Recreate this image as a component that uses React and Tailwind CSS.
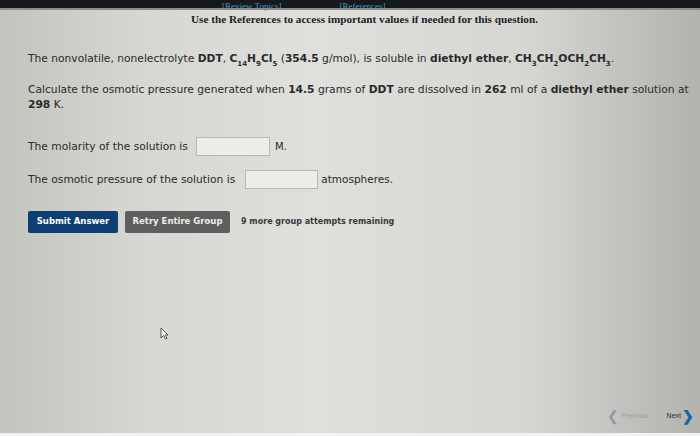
import React from "react";

const Sub = ({ children }) => <sub className="text-[7px] align-[-2px] leading-none">{children}</sub>;

export default function App() {
  return (
    <div className="w-[700px] h-[436px] overflow-hidden flex flex-col bg-[linear-gradient(90deg,#c4c4bf_0%,#d6d6d2_20%,#dfdfdc_45%,#d6d6d2_75%,#b2b2ae_100%)] font-['DejaVu_Sans',sans-serif] text-[#2a2a2a]">
      {/* top bar, cut off */}
      <div className="h-[8px] bg-[#15191d] flex items-end text-[9px] leading-none text-[#3e9fc0] font-['Liberation_Serif',serif]">
        <span className="ml-[222px] -mb-[3px]">[Review Topics]</span>
        <span className="ml-[58px] -mb-[3px]">[References]</span>
      </div>
      <div className="h-[2px] bg-[#8c8c88]" />

      <p className="mt-[1px] ml-[191px] text-[11.2px] font-bold font-['Liberation_Serif',serif] text-[#1e1e1e]">
        Use the References to access important values if needed for this question.
      </p>

      <div className="pl-[28px] pr-[8px] text-[10.7px]">
        <p className="mt-[23px] leading-[16px]">
          The nonvolatile, nonelectrolyte <b>DDT</b>, <b>C<Sub>14</Sub>H<Sub>9</Sub>Cl<Sub>5</Sub></b> (<b>354.5</b> g/mol), is soluble in <b>diethyl ether</b>, <b>CH<Sub>3</Sub>CH<Sub>2</Sub>OCH<Sub>2</Sub>CH<Sub>3</Sub></b>.
        </p>
        <p className="mt-[15px] leading-[15px]">
          Calculate the osmotic pressure generated when <b>14.5</b> grams of <b>DDT</b> are dissolved in <b>262</b> ml of a <b>diethyl ether</b> solution at <b>298</b> K.
        </p>

        <div className="mt-[25px] flex items-center h-[20px]">
          <span>The molarity of the solution is</span>
          <span className="ml-[8px] w-[74px] h-[19px] border border-[#b8b8b8] bg-[#ececea]" />
          <span className="ml-[5px] text-[10px]">M.</span>
        </div>
        <div className="mt-[13px] flex items-center h-[20px]">
          <span>The osmotic pressure of the solution is</span>
          <span className="ml-[10px] w-[73px] h-[19px] border border-[#b8b8b8] bg-[#ececea]" />
          <span className="ml-[3px] text-[10.5px]">atmospheres.</span>
        </div>

        <div className="mt-[21px] flex items-center">
          <button className="w-[90px] h-[22px] rounded-[2px] bg-[#0d3f72] text-white text-[8.5px] font-bold">Submit Answer</button>
          <button className="ml-[7px] w-[105px] h-[22px] rounded-[2px] bg-[#5e5e5e] text-[#eeeeee] text-[8.5px] font-bold">Retry Entire Group</button>
          <span className="ml-[11px] text-[8px] font-bold text-[#3a3a3a]">9 more group attempts remaining</span>
        </div>
      </div>

      <div className="flex-1 relative">
        {/* mouse pointer */}
        <svg className="absolute left-[160px] top-[94px]" width="9" height="13" viewBox="0 0 9 13">
          <path d="M1 1 L1 11 L3.5 8.5 L5.5 12 L7 11.3 L5 8 L8 8 Z" fill="#f4f4f4" stroke="#333" strokeWidth="0.8" />
        </svg>
        <div className="absolute right-[6px] bottom-[10px] flex items-center text-[7px] font-['Liberation_Sans',sans-serif]">
          <span className="text-[#8a9aa8] text-[14px] leading-none">❮</span>
          <span className="ml-[2px] text-[#9aa2a8]">Previous</span>
          <span className="ml-[18px] text-[#22303c]">Next</span>
          <span className="ml-[1px] text-[#1563a8] text-[14px] leading-none font-bold">❯</span>
        </div>
      </div>
      <div className="h-[3px] bg-[#f2f2f2]" />
    </div>
  );
}
